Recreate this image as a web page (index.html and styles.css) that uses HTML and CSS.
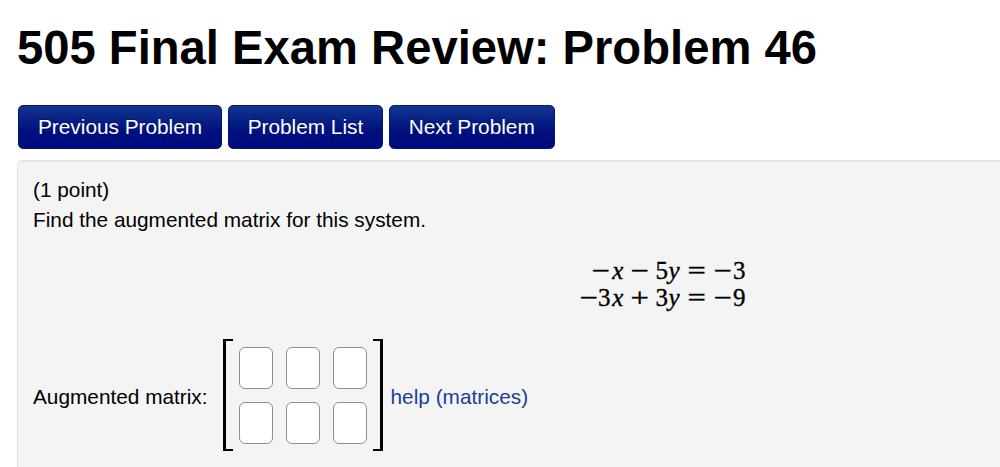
FILE: index.html
```html
<!DOCTYPE html>
<html lang="en">
<head>
<meta charset="utf-8">
<title>505 Final Exam Review: Problem 46</title>
<link rel="stylesheet" href="styles.css">
</head>
<body>
<div class="page">
  <h1 class="title">505 Final Exam Review: Problem 46</h1>
  <div class="nav">
    <a class="btn" href="#">Previous Problem</a>
    <a class="btn" href="#">Problem List</a>
    <a class="btn" href="#">Next Problem</a>
  </div>
  <div class="problem">
    <div class="line">(1 point)</div>
    <div class="line">Find the augmented matrix for this system.</div>
    <div class="math">
      <div class="eqs">
        <span class="lhs"><span class="op">−</span><i class="vx">x</i><span class="op bin">−</span><span class="d">5</span><i class="vy">y</i></span><span class="rhs"><span class="op rel">=</span><span class="op">−</span><span class="d">3</span></span>
        <span class="lhs"><span class="op">−</span><span class="d">3</span><i class="vx">x</i><span class="op bin">+</span><span class="d">3</span><i class="vy">y</i></span><span class="rhs"><span class="op rel">=</span><span class="op">−</span><span class="d">9</span></span>
      </div>
    </div>
    <div class="answer">
      <span class="label">Augmented matrix:</span>
      <span class="bracket left"></span>
      <div class="cells">
        <input class="cell" type="text">
        <input class="cell" type="text">
        <input class="cell" type="text">
        <input class="cell" type="text">
        <input class="cell" type="text">
        <input class="cell" type="text">
      </div>
      <span class="bracket right"></span>
      <a class="help" href="#">help (matrices)</a>
    </div>
  </div>
</div>
</body>
</html>
```

FILE: styles.css
```css
html, body {
  margin: 0;
  padding: 0;
  overflow: hidden;
  background: #ffffff;
}

body {
  font-family: "Liberation Sans", Arial, sans-serif;
  font-size: 20.8px;
  color: #000;
}

.page {
  padding: 0 0 0 17px;
}

.title {
  margin: 0;
  padding-top: 22px;
  font-size: 47.2px;
  line-height: 52px;
  font-weight: bold;
  color: #000;
}

.nav {
  display: flex;
  gap: 5.5px;
  margin-top: 31px;
  padding-left: 1px;
}

.btn {
  display: block;
  height: 42px;
  line-height: 42px;
  padding: 0 19px;
  border: 1px solid #001a66;
  border-radius: 5px;
  background: linear-gradient(to bottom, #11368e 0%, #00107f 60%, #000a80 100%);
  color: #fff;
  text-decoration: none;
  font-size: 20.8px;
  white-space: nowrap;
  text-shadow: 0 -1px 0 rgba(0, 0, 0, 0.25);
}

.problem {
  margin-top: 11px;
  width: 1258px;
  padding: 14px 15px 40px;
  background: #f4f4f4;
  border: 1px solid #e3e3e3;
  border-radius: 5px;
  box-shadow: inset 0 1px 2px rgba(0, 0, 0, 0.06);
}

.line {
  line-height: 30px;
}

.math {
  display: flex;
  justify-content: center;
  margin-top: 22px;
  font-family: "Liberation Serif", "Times New Roman", serif;
  font-size: 25px;
}

.eqs {
  display: grid;
  grid-template-columns: auto auto;
  line-height: 27px;
  -webkit-text-stroke: 0.35px #000;
}

.lhs {
  text-align: right;
  white-space: nowrap;
}

.rhs {
  text-align: left;
  white-space: nowrap;
}

.op {
  display: inline-block;
  width: 0.778em;
  text-align: center;
  transform: scaleX(1.3);
}

.d {
  display: inline-block;
  width: 0.5em;
  text-align: center;
}

.vx {
  display: inline-block;
  width: 0.572em;
  font-style: italic;
  text-align: center;
}

.vy {
  display: inline-block;
  width: 0.49em;
  font-style: italic;
  text-align: center;
}

.bin {
  margin: 0 0.222em;
}

.rel {
  margin: 0 0.278em;
}

.answer {
  display: flex;
  align-items: center;
  margin-top: 28px;
}

.label {
  margin-right: 15px;
  padding-top: 3px;
}

.bracket {
  display: block;
  width: 7px;
  height: 108px;
  border-top: 2px solid #000;
  border-bottom: 2px solid #000;
}

.bracket.left {
  border-left: 3px solid #000;
}

.bracket.right {
  border-right: 3px solid #000;
}

.cells {
  display: grid;
  grid-template-columns: repeat(3, 34px);
  grid-auto-rows: 42px;
  column-gap: 13px;
  row-gap: 13px;
  padding: 0 6px;
}

.cell {
  box-sizing: border-box;
  width: 34px;
  height: 42px;
  margin: 0;
  padding: 0;
  border: 1px solid #8f8f8f;
  border-radius: 6px;
  background: #fff;
}

.help {
  margin-left: 8px;
  padding-top: 3px;
  color: #1a3f96;
  text-decoration: none;
}
```
